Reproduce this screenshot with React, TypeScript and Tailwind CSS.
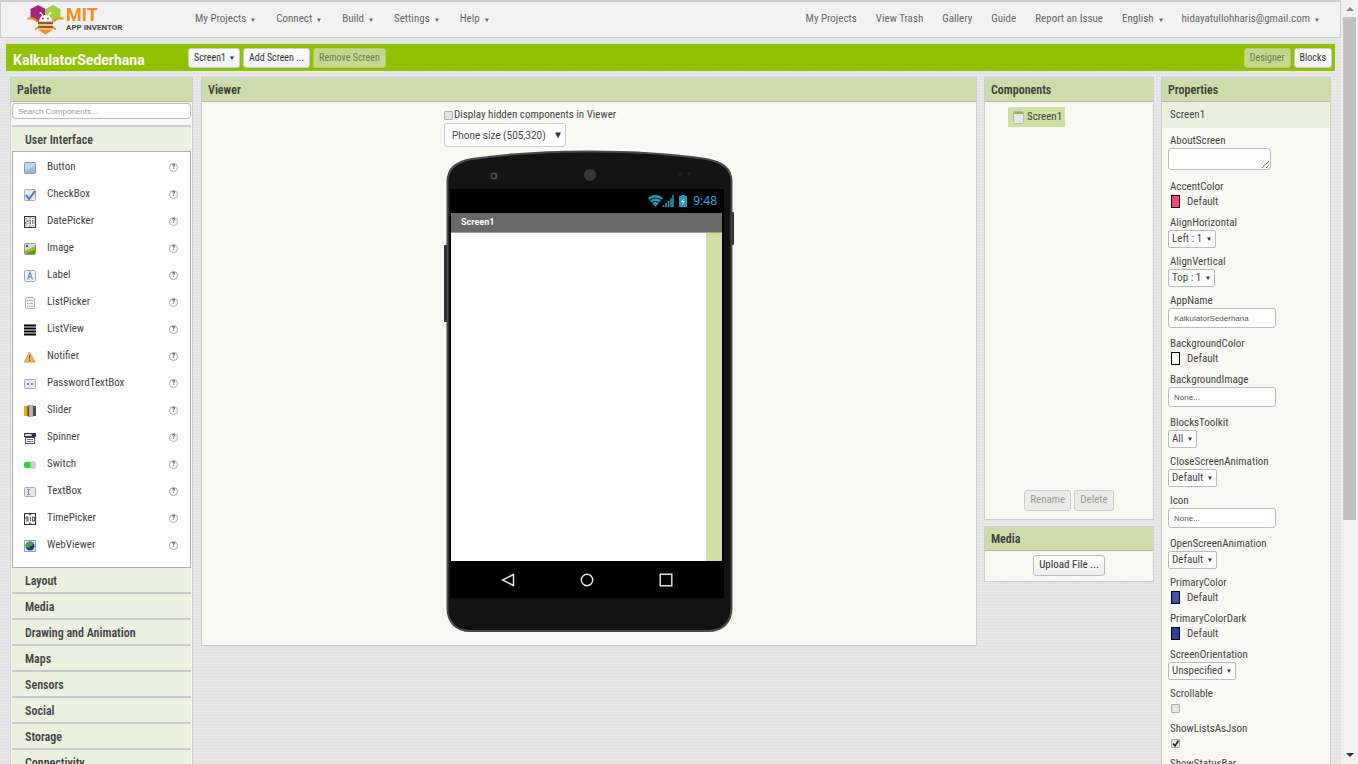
import { useState, type ReactNode } from 'react';

const leftMenu = ['My Projects', 'Connect', 'Build', 'Settings', 'Help'];
const rightLinks = ['My Projects', 'View Trash', 'Gallery', 'Guide', 'Report an Issue'];
const accountMenu = ['English', 'hidayatullohharis@gmail.com'];
const sections = ['Layout', 'Media', 'Drawing and Animation', 'Maps', 'Sensors', 'Social', 'Storage', 'Connectivity'];

// Small 12x12 drawings for the palette rows
const icons: Record<string, ReactNode> = {
  Button: (
    <>
      <rect x="0.5" y="0.5" width="11" height="11" rx="1" fill="#9dbbe2" stroke="#8795ab" />
      <path d="M1 1h10v3L1 9z" fill="#c3d6f0" />
    </>
  ),
  CheckBox: (
    <>
      <rect x="0.5" y="0.5" width="11" height="11" rx="1" fill="#e2e5ea" stroke="#a5a8ad" />
      <path d="M2 6l3 4 6-8" fill="none" stroke="#4674c0" strokeWidth="2" />
    </>
  ),
  DatePicker: (
    <>
      <rect x="0.5" y="0.5" width="11" height="11" fill="#fff" stroke="#333" />
      <path d="M1 2.500h3M8 2.500h3M1 9.500h3M8 9.500h3" stroke="#e3a76a" />
      <path d="M5 1.500l1 1 1-1M5 10.500l1-1 1 1" stroke="#333" fill="none" />
      <path d="M1.500 4h2v2h-2v2h2M5 4h1.500v4H5zM8.500 4v4M10 4v4" fill="none" stroke="#555" strokeWidth="0.700" />
    </>
  ),
  Image: (
    <>
      <rect x="0.5" y="0.5" width="11" height="11" rx="1" fill="#dcdcdc" stroke="#8f9a80" />
      <path d="M1 11V8l10-5v8z" fill="#8fc31c" />
      <path d="M1 11l10-4v4z" fill="#4e9a06" />
      <circle cx="3" cy="3" r="1.200" fill="#555" />
    </>
  ),
  Label: (
    <>
      <rect x="0.5" y="0.5" width="11" height="11" rx="1" fill="#eef1f6" stroke="#a3a9b3" />
      <path d="M3.500 9.500L6 2.500l2.500 7M4.500 7h3" fill="none" stroke="#6f97d3" strokeWidth="1.300" />
    </>
  ),
  ListPicker: (
    <>
      <rect x="1.500" y="0.5" width="9" height="11" rx="1" fill="#f0f0ee" stroke="#b4b4b0" />
      <path d="M3 3.500h1M3 6.500h1M3 9.500h1" stroke="#86b23c" />
      <path d="M5 3.500h4M5 6.500h4M5 9.500h4" stroke="#bbb" />
    </>
  ),
  ListView: <path d="M0 1.500h12M0 4.500h12M0 7.500h12M0 10.500h12" stroke="#000" strokeWidth="2" />,
  Notifier: (
    <>
      <path d="M5.500 1L11 11H0.500z" fill="#f3bb59" stroke="#d09a46" />
      <path d="M5.700 4v3.500M5.700 8.500v1.500" stroke="#6b5836" strokeWidth="1.200" />
    </>
  ),
  PasswordTextBox: (
    <>
      <rect x="0.5" y="1.500" width="11" height="9" rx="1" fill="#e6e8ec" stroke="#a9abb0" />
      <rect x="3" y="5" width="2" height="2" fill="#6288cb" />
      <rect x="7" y="5" width="2" height="2" fill="#6288cb" />
    </>
  ),
  Slider: (
    <>
      <rect x="0" y="1" width="5" height="10" fill="#eda90d" />
      <rect x="9" y="1" width="3" height="10" fill="#4d4d4d" />
      <rect x="3.500" y="0.5" width="2" height="11" fill="#444" />
      <rect x="5" y="0.5" width="4" height="11" fill="#b9b9b9" stroke="#777" strokeWidth="0.500" />
    </>
  ),
  Spinner: (
    <>
      <rect x="0.5" y="1.500" width="11" height="3" fill="#d5dbe6" stroke="#303a50" />
      <path d="M7 1h5v3l-2 1.500L8 4z" fill="#1c2f6c" />
      <rect x="1.500" y="5.500" width="9" height="6" fill="#fff" stroke="#555" />
      <path d="M3 7.500h6M3 9.500h6" stroke="#777" />
    </>
  ),
  Switch: (
    <>
      <rect x="0" y="3" width="10" height="6" rx="2" fill="#0ae51c" />
      <ellipse cx="9" cy="6" rx="3" ry="4" fill="#c9c9c9" />
    </>
  ),
  TextBox: (
    <>
      <rect x="0.5" y="1.500" width="11" height="9" rx="1" fill="#e4e5e8" stroke="#a6a8ac" />
      <path d="M3 3.500h3M4.500 3v6M3 8.500h3" stroke="#7d90b4" fill="none" />
    </>
  ),
  TimePicker: (
    <>
      <rect x="0.5" y="0.5" width="11" height="11" fill="#f5f7f8" stroke="#333" />
      <path d="M5 1l1 1.500L7 1M5 11l1-1.500L7 11" stroke="#567" fill="none" />
      <path d="M2 4h2v2H2zM4 6v2H2M6.500 4v4M8.500 4h2v4h-2z" fill="none" stroke="#333" strokeWidth="0.800" />
    </>
  ),
  WebViewer: (
    <>
      <rect x="0.5" y="0.5" width="11" height="11" fill="#e8f1fb" stroke="#7ba2d4" />
      <circle cx="6" cy="6" r="4.500" fill="#203f79" />
      <path d="M3 3c2-2 5-1 6 0s-1 3-2 3-1 2-3 2-3-3-1-5z" fill="#4e9b45" />
    </>
  ),
};

type Property = { name: string; kind: 'area' | 'color' | 'select' | 'text' | 'check'; value?: string; swatch?: string };

const properties: Property[] = [
  { name: 'AboutScreen', kind: 'area' },
  { name: 'AccentColor', kind: 'color', swatch: 'bg-[#ff4081]' },
  { name: 'AlignHorizontal', kind: 'select', value: 'Left : 1' },
  { name: 'AlignVertical', kind: 'select', value: 'Top : 1' },
  { name: 'AppName', kind: 'text', value: 'KalkulatorSederhana' },
  { name: 'BackgroundColor', kind: 'color', swatch: 'bg-white' },
  { name: 'BackgroundImage', kind: 'text', value: 'None...' },
  { name: 'BlocksToolkit', kind: 'select', value: 'All' },
  { name: 'CloseScreenAnimation', kind: 'select', value: 'Default' },
  { name: 'Icon', kind: 'text', value: 'None...' },
  { name: 'OpenScreenAnimation', kind: 'select', value: 'Default' },
  { name: 'PrimaryColor', kind: 'color', swatch: 'bg-[#3f51b5]' },
  { name: 'PrimaryColorDark', kind: 'color', swatch: 'bg-[#303f9f]' },
  { name: 'ScreenOrientation', kind: 'select', value: 'Unspecified' },
  { name: 'Scrollable', kind: 'check' },
  { name: 'ShowListsAsJson', kind: 'check', value: 'on' },
  { name: 'ShowStatusBar', kind: 'check', value: 'on' },
];

function Caret({ className = 'fill-[#666]' }: { className?: string }) {
  return (
    <svg viewBox="0 0 4 4" className={`w-1 h-1 shrink-0 ${className}`} aria-hidden="true">
      <path d="M0 0.500h4L2 4z" />
    </svg>
  );
}

function CheckInput({ id, initial = false }: { id: string; initial?: boolean }) {
  const [on, setOn] = useState(initial);
  return (
    <span className="inline-grid shrink-0">
      <input
        id={id}
        type="checkbox"
        checked={on}
        onChange={(e) => setOn(e.target.checked)}
        className="appearance-none col-start-1 row-start-1 w-[9px] h-[9px] border border-[#aaa] rounded-[1px] bg-[#e4e4e4]"
      />
      {on && (
        <svg viewBox="0 0 9 9" className="col-start-1 row-start-1 w-[9px] h-[9px] pointer-events-none">
          <path d="M2 4.500l2 2.500 3.500-5.500" fill="none" stroke="#222" strokeWidth="1.600" />
        </svg>
      )}
    </span>
  );
}

function PanelTitle({ children }: { children: ReactNode }) {
  return (
    <h2 className="h-6 px-[6px] flex items-center bg-[#ccdcaa] border-b border-[#b4b8ae] text-xs font-semibold text-[#3c3c3c]">
      {children}
    </h2>
  );
}

function PropertyRow({ item }: { item: Property }) {
  const id = `prop-${item.name}`;
  return (
    <div
      className={
        item.kind === 'area' ? 'h-[46px]'
        : item.kind === 'color' ? 'h-9'
        : item.kind === 'select' ? 'h-[39px]'
        : item.kind === 'text' ? 'h-[43px]'
        : 'h-[35px]'
      }
    >
      <label htmlFor={id} className="block pl-[2px] h-[15px] leading-[15px]">{item.name}</label>
      {item.kind === 'area' && (
        <textarea id={id} className="block w-[103px] h-[22px] border border-[#bbb] rounded-[3px] bg-white" />
      )}
      {item.kind === 'color' && (
        <button id={id} className="flex items-center gap-[7px] pl-[3px] h-[15px] leading-[15px]">
          <span className={`w-[9px] h-[13px] border border-black ${item.swatch}`} />
          Default
        </button>
      )}
      {item.kind === 'select' && (
        <span className="inline-flex items-center h-[18px] pl-[3px] pr-1 gap-1 border border-[#bbb] rounded-[2px] bg-white align-top">
          <select id={id} className="appearance-none leading-4">
            <option>{item.value}</option>
          </select>
          <Caret className="fill-[#333]" />
        </span>
      )}
      {item.kind === 'text' && (
        <input
          id={id}
          defaultValue={item.value}
          className="block w-[108px] h-5 px-[5px] border border-[#bbb] rounded-[3px] bg-white font-['Liberation_Sans',sans-serif] text-[8px] text-[#555]"
        />
      )}
      {item.kind === 'check' && (
        <div className="pl-[3px] pt-[3px] flex">
          <CheckInput id={id} initial={item.value === 'on'} />
        </div>
      )}
    </div>
  );
}

function Logo() {
  return (
    <a href="#" className="flex items-center gap-px w-[168px] pl-[26px]">
      <svg viewBox="0 0 38 32" className="w-[38px] h-8 shrink-0">
        <path d="M11 1l7.500 4v9L11 18l-7.500-4V5z" fill="#a5257b" />
        <path d="M26 1l7.500 4v9L26 18l-7.500-4V5z" fill="#a2cf3d" />
        <path d="M0.500 14.500h6l4 3M36.500 14.500h-6l-4 3" fill="none" stroke="#f68b1f" strokeWidth="1.800" />
        <path d="M8 25.500l4-2.500M29 25.500l-4-2.500" stroke="#f68b1f" strokeWidth="1.600" />
        <path d="M12 18c0-5 3-7 6.500-7s6.500 2 6.500 7z" fill="#fff" />
        <path d="M16 12l-2-3M21 12l2-3" stroke="#fff" strokeWidth="1.200" />
        <circle cx="13.500" cy="9" r="1" fill="#fff" />
        <circle cx="23.500" cy="9" r="1" fill="#fff" />
        <circle cx="16" cy="14.500" r="0.900" fill="#555" />
        <circle cx="21" cy="14.500" r="0.900" fill="#555" />
        <path d="M11 17.500h15v8l-7.500 5-7.500-5z" fill="#f68b1f" />
        <path d="M11 19h15M11 23h15" stroke="#55504a" strokeWidth="1.500" />
        <path d="M11 21h15M11 25h15" stroke="#fff" strokeWidth="0.800" />
      </svg>
      <span className="flex flex-col font-['Roboto',sans-serif] font-bold">
        <span className="text-lg leading-[17px] text-[#f68b1f]">MIT</span>
        <span className="text-[8px] leading-[10px] text-[#4a4a4a] whitespace-nowrap">APP INVENTOR</span>
      </span>
    </a>
  );
}

function Phone() {
  return (
    <div className="relative w-[290px] h-[482px] mt-[3px]">
      <svg viewBox="0 0 290 482" className="absolute inset-0 w-full h-full">
        <rect x="0" y="95" width="4" height="77" rx="1" fill="#2b2b2d" />
        <rect x="286" y="62" width="4" height="33" rx="1" fill="#2b2b2d" />
        <path
          d="M3.500 32C3.500 18 12 12 28 9C70 3 105 1.500 145 1.500S222 3 262 9C278 12 287.500 18 287.500 32V458C287.500 472 279 481 264 481H26C12 481 3.500 472 3.500 458Z"
          fill="#131313"
          stroke="#4b4b4d"
          strokeWidth="2"
        />
        <circle cx="50" cy="26" r="3.500" fill="#555" />
        <circle cx="49.500" cy="26" r="2" fill="#17173a" />
        <circle cx="146" cy="25" r="6" fill="#3c3c3c" />
        <circle cx="146" cy="25" r="5" fill="none" stroke="#222" strokeDasharray="1 1" />
        <circle cx="146" cy="25" r="2.500" fill="none" stroke="#222" strokeDasharray="1 1" />
        <circle cx="236" cy="24" r="2" fill="#1f1f1f" />
        <circle cx="245" cy="24" r="2" fill="#1f1f1f" />
      </svg>
      <div className="relative pt-[39px] pl-[6px] pr-[10px]">
        <div className="bg-black pl-px pr-[2px]">
          <div className="h-6 flex items-center justify-end pr-[5px] text-[#33b5e5]">
            <svg viewBox="0 0 40 14" className="w-10 h-[14px]">
              <path d="M0 4C4 0 11 0 15 4L7.500 13z" fill="#2596bd" />
              <path d="M1 6.500c4-3 9-3 13 0M3 9c3-2 6-2 9 0" fill="none" stroke="#000" strokeWidth="0.900" />
              <path d="M15.500 13v-2M18 13V9M20.500 13V7M23 13V4M25 13V1" stroke="#2596bd" strokeWidth="1.600" />
              <path d="M31 2h2V1h4v1h2v11h-8z" fill="#2596bd" />
              <path d="M36 4l-3 4h2l-1 3 3-4h-2z" fill="#e6f6fc" />
            </svg>
            <span className="pl-[5px] font-['Open_Sans',sans-serif] text-xs">9:48</span>
          </div>
          <div className="h-5 pl-[10px] flex items-center bg-[#696969] border-b border-[#999] font-['Roboto',sans-serif] text-[9px] font-bold text-white">
            Screen1
          </div>
          <div className="h-[328px] flex bg-white">
            <div className="flex-1" />
            <div className="w-4 bg-[#d0dfa3]" />
          </div>
          <div className="h-[37px] flex items-center justify-around px-[17px]">
            <svg viewBox="0 0 14 14" className="w-[14px] h-[14px]"><path d="M12.500 1.500v11L1.500 7z" fill="none" stroke="#eee" strokeWidth="1.400" /></svg>
            <svg viewBox="0 0 14 14" className="w-[14px] h-[14px]"><circle cx="7" cy="7" r="5.700" fill="none" stroke="#eee" strokeWidth="1.400" /></svg>
            <svg viewBox="0 0 14 14" className="w-[14px] h-[14px]"><rect x="1.200" y="1.200" width="11.600" height="11.600" fill="none" stroke="#eee" strokeWidth="1.400" /></svg>
          </div>
        </div>
      </div>
    </div>
  );
}

export default function App() {
  const lightButton = 'h-5 px-[5px] flex items-center gap-1 rounded-[3px] border border-[#ccc] bg-linear-to-b from-white to-[#f0f0f4] text-[#333]';
  const fadedButton = 'h-5 px-[5px] rounded-[3px] border border-[#b3cc77] bg-[#c2d88c] text-[#6f8048]';
  const grayButton = 'h-[21px] px-[5px] rounded-[3px] border border-[#ccc] bg-[#ebebe9] text-[11px] text-[#999]';

  return (
    <div className="h-screen flex overflow-hidden bg-[#e6e6e6] font-['Roboto_Condensed','Liberation_Sans_Narrow',sans-serif] text-[11px] text-[#444]">
      <div className="flex-1 min-w-0 flex flex-col bg-[repeating-linear-gradient(0deg,#dcdcdc88_0_1px,transparent_1px_3px),repeating-linear-gradient(90deg,#eeeeee88_0_1px,transparent_1px_3px)]">
        <header className="h-[38px] shrink-0 flex items-center bg-[#f2f2f2] border border-t-2 border-[#ccc] text-[#666]">
          <Logo />
          <nav className="flex-1 flex items-center gap-[21px] pl-[26px]">
            {leftMenu.map((name) => (
              <button key={name} className="flex items-center gap-[5px] whitespace-nowrap">{name}<Caret /></button>
            ))}
          </nav>
          <nav className="flex items-center gap-[19px] pr-[21px] whitespace-nowrap">
            {rightLinks.map((name) => <a key={name} href="#">{name}</a>)}
            {accountMenu.map((name) => (
              <button key={name} className="flex items-center gap-[5px]">{name}<Caret /></button>
            ))}
          </nav>
        </header>

        <div className="h-[27px] shrink-0 mt-[6px] mx-[6px] pl-[7px] pr-[3px] flex items-center gap-[3px] bg-[#8fc202] text-[10px]">
          <h1 className="w-[172px] pt-1 font-['Roboto',sans-serif] text-sm font-bold text-white">KalkulatorSederhana</h1>
          <button className={lightButton}>Screen1<Caret className="fill-[#333]" /></button>
          <button className={lightButton}>Add Screen ...</button>
          <button className={fadedButton}>Remove Screen</button>
          <div className="flex-1" />
          <button className={fadedButton}>Designer</button>
          <button className={lightButton}>Blocks</button>
        </div>

        <main className="flex-1 min-h-0 flex items-start pt-[6px] px-[10px]">
          <section className="w-[183px] shrink-0 mr-2 border border-[#ccc] bg-[#f8f9f3]">
            <PanelTitle>Palette</PanelTitle>
            <div className="p-px">
              <input
                aria-label="Search Components"
                placeholder="Search Components..."
                className="block w-full h-4 px-[5px] border border-[#bbb] rounded-[3px] bg-white font-['Liberation_Sans',sans-serif] text-[8px] placeholder:text-[#999]"
              />
              <button className="block w-full h-[26px] mt-[6px] pl-[13px] pt-px text-left border-t-2 border-[#ccc] bg-[#edf1df] text-xs font-semibold">
                User Interface
              </button>
              <ul className="h-[417px] pt-[2px] border border-[#aaa] bg-white">
                {Object.keys(icons).map((name) => (
                  <li key={name} className="h-[27px] pl-[11px] pr-3 flex items-center">
                    <svg viewBox="0 0 12 12" className="w-3 h-3 mt-px mr-[11px]">{icons[name]}</svg>
                    <span className="flex-1">{name}</span>
                    <button aria-label={`About ${name}`} className="w-[9px] h-[9px] rounded-full border border-[#aaa] flex items-center justify-center text-[7px] font-bold text-[#444]">
                      ?
                    </button>
                  </li>
                ))}
              </ul>
              {sections.map((name) => (
                <button key={name} className="block w-full h-[26px] pl-[13px] pt-[2px] text-left border-b-2 border-[#c9c9c9] bg-[#edf1df] text-xs font-semibold">
                  {name}
                </button>
              ))}
            </div>
          </section>

          <section className="flex-1 min-w-0 mr-[7px] border border-[#ccc] bg-[#f8f9f3]">
            <PanelTitle>Viewer</PanelTitle>
            <div className="pt-[6px] pb-[13px] flex justify-center">
              <div className="w-[290px]">
                <div className="h-[15px] flex items-center gap-px">
                  <CheckInput id="show-hidden" />
                  <label htmlFor="show-hidden">Display hidden components in Viewer</label>
                </div>
                <div className="w-[122px] h-6 px-[7px] flex items-center bg-white border border-[#ccc] rounded-[3px]">
                  <select aria-label="Device size" className="flex-1 appearance-none font-['Roboto',sans-serif] text-[10px]">
                    <option>Phone size (505,320)</option>
                  </select>
                  <svg viewBox="0 0 7 7" className="w-[6px] h-[7px] -mr-[3px]"><path d="M0 0h7L3.500 7z" fill="#333" /></svg>
                </div>
                <Phone />
              </div>
            </div>
          </section>

          <div className="w-[170px] shrink-0 mr-[7px] flex flex-col gap-[6px]">
            <section className="h-[443px] flex flex-col border border-[#ccc] bg-[#f8f9f3]">
              <PanelTitle>Components</PanelTitle>
              <div className="flex-1 pt-[5px] pl-[23px]">
                <button className="h-5 pl-[5px] pr-[3px] flex items-center gap-[3px] bg-[#d0dfa3]">
                  <svg viewBox="0 0 11 13" className="w-[11px] h-[13px]">
                    <rect x="0.5" y="0.5" width="10" height="12" rx="1" fill="#e9e9ed" stroke="#b5b5b5" />
                    <path d="M1 2h9" stroke="#9cba39" strokeWidth="2" />
                  </svg>
                  Screen1
                </button>
              </div>
              <div className="pb-2 flex justify-center gap-[3px]">
                <button className={grayButton}>Rename</button>
                <button className={grayButton}>Delete</button>
              </div>
            </section>
            <section className="border border-[#ccc] bg-[#f8f9f3]">
              <PanelTitle>Media</PanelTitle>
              <div className="pt-1 pb-[5px] flex justify-center">
                <button className="h-[21px] px-[5px] rounded-[3px] border border-[#bbb] bg-linear-to-b from-white to-[#eee] text-[#333]">Upload File ...</button>
              </div>
            </section>
          </div>

          <section className="w-[170px] shrink-0 border border-[#ccc] bg-[#f8f9f3]">
            <PanelTitle>Properties</PanelTitle>
            <div className="h-[26px] px-2 flex items-center bg-[#edf1df]">Screen1</div>
            <div className="pt-[5px] px-[6px]">
              {properties.map((item) => <PropertyRow key={item.name} item={item} />)}
            </div>
          </section>
        </main>
      </div>

      {/* Page scrollbar */}
      <div className="w-[17px] shrink-0 flex flex-col items-center bg-[#f1f1f1]" aria-hidden="true">
        <svg viewBox="0 0 8 4" className="w-2 h-1 mt-[7px] mb-[6px]"><path d="M4 0l4 4H0z" fill="#888" /></svg>
        <div className="w-[13px] h-[503px] bg-[#c1c1c1]" />
        <div className="flex-1" />
        <svg viewBox="0 0 8 4" className="w-2 h-1 mb-[7px]"><path d="M0 0h8L4 4z" fill="#333" /></svg>
      </div>
    </div>
  );
}
